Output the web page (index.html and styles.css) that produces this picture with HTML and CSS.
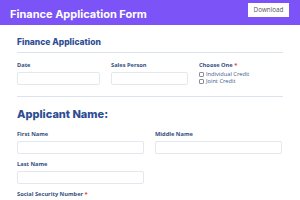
FILE: index.html
```html
<!DOCTYPE html>
<html lang="en">
<head>
    <meta charset="UTF-8">
    <title>Finance Application Form</title>
    <link rel="stylesheet" href="styles.css">
</head>
<body>
    <div class="topbar">
        <h1>Finance Application Form</h1>
        <button class="download">Download</button>
    </div>

    <div class="form">
        <h2 class="section-title">Finance Application</h2>

        <div class="row-three">
            <div class="field">
                <label>Date</label>
                <input type="text">
            </div>
            <div class="field">
                <label>Sales Person</label>
                <input type="text">
            </div>
            <div class="field">
                <label>Choose One <span class="req">*</span></label>
                <div class="check"><span class="box"></span>Individual Credit</div>
                <div class="check"><span class="box"></span>Joint Credit</div>
            </div>
        </div>

        <h2 class="big-title">Applicant Name:</h2>

        <div class="row-two">
            <div class="field">
                <label>First Name</label>
                <input type="text">
            </div>
            <div class="field">
                <label>Middle Name</label>
                <input type="text">
            </div>
            <div class="field">
                <label>Last Name</label>
                <input type="text">
            </div>
            <div class="field"></div>
            <div class="field wide">
                <label>Social Security Number <span class="req">*</span></label>
                <input type="text">
            </div>
        </div>
    </div>
</body>
</html>
```

FILE: styles.css
```css
* {
    margin: 0;
    padding: 0;
    box-sizing: border-box;
}

body {
    font-family: 'Open Sans', 'Liberation Sans', sans-serif;
    background: #ffffff;
    overflow: hidden;
}

.topbar {
    height: 25px;
    background: #7b53f6;
    display: flex;
    justify-content: space-between;
    align-items: center;
    padding: 0 11px 0 10px;
}

.topbar h1 {
    color: #ffffff;
    font-family: 'Inter', sans-serif;
    font-size: 11px;
    font-weight: 700;
    margin-top: 2px;
}

.download {
    background: #ffffff;
    border: none;
    color: #555555;
    font-family: 'Open Sans', sans-serif;
    font-size: 6.3px;
    width: 41px;
    height: 14px;
    margin-top: -6px;
}

.form {
    padding: 0 17px;
}

.section-title {
    color: #2d4d94;
    font-family: 'Inter', sans-serif;
    font-size: 8.5px;
    font-weight: 800;
    line-height: 11px;
    padding: 12px 0 4px;
    border-bottom: 1px solid #dbe3ee;
}

.row-three {
    display: grid;
    grid-template-columns: 83px 77px 1fr;
    column-gap: 11px;
    padding: 9px 0 10px;
    border-bottom: 1px solid #dbe3ee;
}

.field label {
    display: block;
    color: #34507f;
    font-size: 5.7px;
    font-weight: 700;
    line-height: 7px;
    margin-bottom: 3px;
}

.req {
    color: #e23b3b;
}

.field input {
    display: block;
    width: 100%;
    height: 13px;
    border: 1px solid #e3e7ee;
    border-radius: 2px;
    background: #ffffff;
}

.check {
    display: flex;
    align-items: center;
    color: #3e5a8a;
    font-size: 5.7px;
    line-height: 7px;
    margin-top: -1px;
    margin-bottom: 1px;
}

.box {
    width: 5px;
    height: 5px;
    border: 1px solid #8a8f99;
    border-radius: 1px;
    margin-right: 2px;
}

.big-title {
    color: #2d4d94;
    font-family: 'Inter', sans-serif;
    font-size: 11px;
    font-weight: 800;
    line-height: 14px;
    padding: 10px 0 10px;
}

.row-two {
    display: grid;
    grid-template-columns: 127px 127px;
    column-gap: 11px;
    row-gap: 7px;
}

.row-two .wide {
    grid-column: 1 / 3;
}
```
